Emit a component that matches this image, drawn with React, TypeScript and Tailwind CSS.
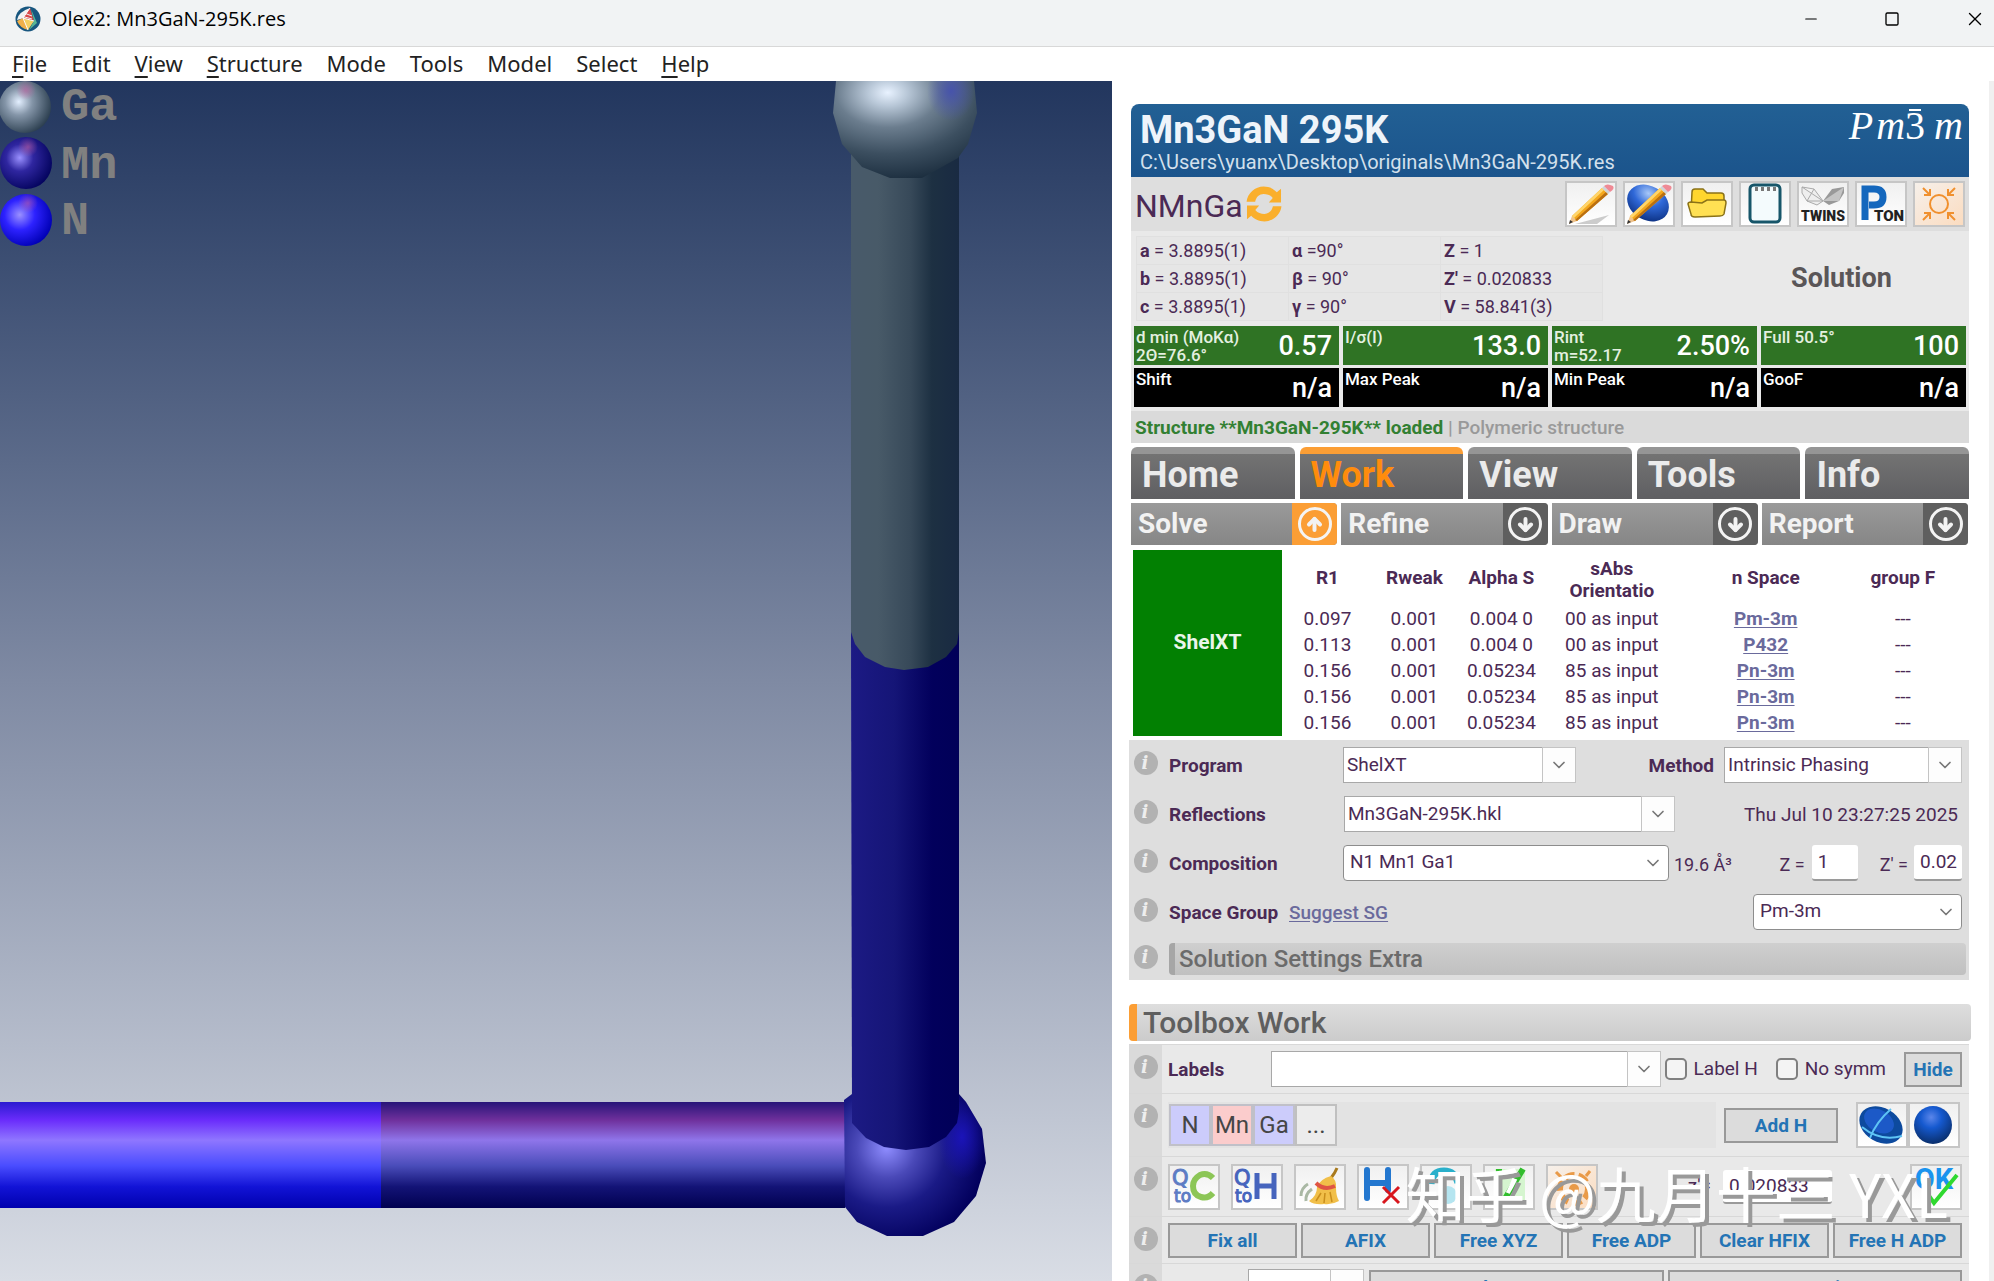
import React from 'react'
import { ArrowDown, ArrowUp, ChevronDown, Minus, Square, X } from 'lucide-react'

const menus = [
  { label: 'File', hot: true },
  { label: 'Edit', hot: false },
  { label: 'View', hot: true },
  { label: 'Structure', hot: true },
  { label: 'Mode', hot: false },
  { label: 'Tools', hot: false },
  { label: 'Model', hot: false },
  { label: 'Select', hot: false },
  { label: 'Help', hot: true },
]

const cell = [
  ['a', '= 3.8895(1)', 'α', '=90°', 'Z', '= 1'],
  ['b', '= 3.8895(1)', 'β', '= 90°', "Z'", '= 0.020833'],
  ['c', '= 3.8895(1)', 'γ', '= 90°', 'V', '= 58.841(3)'],
]

const stats = [
  { label: 'd min (MoKα)', sub: '2Θ=76.6°', value: '0.57' },
  { label: 'I/σ(I)', sub: '', value: '133.0' },
  { label: 'Rint', sub: 'm=52.17', value: '2.50%' },
  { label: 'Full 50.5°', sub: '', value: '100' },
]

const refineStats = ['Shift', 'Max Peak', 'Min Peak', 'GooF']

const tabs = ['Home', 'Work', 'View', 'Tools', 'Info']
const subTabs = ['Solve', 'Refine', 'Draw', 'Report']

const solutions = [
  ['0.097', '0.001', '0.004 0', '00 as input', 'Pm-3m', '---'],
  ['0.113', '0.001', '0.004 0', '00 as input', 'P432', '---'],
  ['0.156', '0.001', '0.05234', '85 as input', 'Pn-3m', '---'],
  ['0.156', '0.001', '0.05234', '85 as input', 'Pn-3m', '---'],
  ['0.156', '0.001', '0.05234', '85 as input', 'Pn-3m', '---'],
]

const fixButtons = ['Fix all', 'AFIX', 'Free XYZ', 'Free ADP', 'Clear HFIX', 'Free H ADP']

function Logo() {
  return (
    <svg viewBox="0 0 26 26" className="h-[26px] w-[26px]">
      <circle cx="13" cy="13" r="12.5" fill="#17567f" />
      <path d="M15 2 Q3 6 2 14 L9 12 Z" fill="#f3f3f3" />
      <path d="M15 2 L19 15 L8 12 Z" fill="#d94b4b" />
      <path d="M9 7 L17 10 M6 10 L17 13" stroke="#f3f3f3" strokeWidth="1" />
      <path d="M8 12 L2 15 Q5 22 13 24 Z" fill="#f0b04a" />
      <path d="M8 12 L19 15 L13 24 Z" fill="#f4cf62" />
      <path d="M16 3 L22 17 L14 24 L19 15 Z" fill="#58b594" />
      <path d="M8 12 L19 15 M15 2 L8 12 L13 24" stroke="#fff" strokeWidth="1" fill="none" />
    </svg>
  )
}

function TitleBar() {
  return (
    <header className="flex h-[46px] shrink-0 items-center bg-[#f1f3f4] pb-[8px] pl-[15px] font-['Open_Sans',sans-serif]">
      <Logo />
      <h1 className="ml-[11px] flex-1 text-[20px] text-black">Olex2: Mn3GaN-295K.res</h1>
      <button aria-label="Minimize" className="px-8"><Minus size={18} strokeWidth={1.5} /></button>
      <button aria-label="Maximize" className="px-8"><Square size={16} strokeWidth={2} /></button>
      <button aria-label="Close" className="pr-2 pl-8"><X size={22} strokeWidth={1.5} /></button>
    </header>
  )
}

function MenuBar() {
  return (
    <nav className="flex h-[35px] shrink-0 items-center gap-6 border-t border-[#d8d8d8] bg-white pb-[2px] pl-3 font-['Noto_Sans',sans-serif] text-[22px] text-[#222]">
      {menus.map((m) => (
        <button key={m.label} className="leading-none">
          {m.hot ? <span className="underline underline-offset-4">{m.label[0]}</span> : m.label[0]}
          {m.label.slice(1)}
        </button>
      ))}
    </nav>
  )
}

function Viewport() {
  return (
    <section className="relative min-w-0 flex-[1112] overflow-hidden bg-linear-to-b from-[#22365e] via-[#7f8aa3] to-[#d9dde5]">
      <svg viewBox="0 0 1112 1200" preserveAspectRatio="xMinYMin slice" className="h-full w-full">
        <defs>
          <linearGradient id="gaRod">
            <stop offset="0" stopColor="#485a6a" />
            <stop offset="0.25" stopColor="#485a68" />
            <stop offset="0.55" stopColor="#374959" />
            <stop offset="0.75" stopColor="#1d3042" />
            <stop offset="1" stopColor="#192a42" />
          </linearGradient>
          <linearGradient id="mnRod">
            <stop offset="0" stopColor="#1c1a84" />
            <stop offset="0.4" stopColor="#151577" />
            <stop offset="0.75" stopColor="#02005c" />
            <stop offset="1" stopColor="#010058" />
          </linearGradient>
          <linearGradient id="nBar" x2="0" y2="1">
            <stop offset="0" stopColor="#2b1ad0" />
            <stop offset="0.17" stopColor="#6a2cfb" />
            <stop offset="0.36" stopColor="#8f76ff" />
            <stop offset="0.6" stopColor="#4a4dff" />
            <stop offset="0.8" stopColor="#1213d6" />
            <stop offset="1" stopColor="#0000ae" />
          </linearGradient>
          <linearGradient id="mnBar" x2="0" y2="1">
            <stop offset="0" stopColor="#271578" />
            <stop offset="0.17" stopColor="#6f309c" />
            <stop offset="0.36" stopColor="#8f75ea" />
            <stop offset="0.6" stopColor="#4a4dba" />
            <stop offset="0.8" stopColor="#131376" />
            <stop offset="1" stopColor="#000050" />
          </linearGradient>
          <radialGradient id="gaBall" cx="0.38" cy="0.12" r="0.9">
            <stop offset="0" stopColor="#e8f2ff" />
            <stop offset="0.15" stopColor="#b9c8d8" />
            <stop offset="0.4" stopColor="#6b7d8e" />
            <stop offset="0.7" stopColor="#3c4f60" />
            <stop offset="1" stopColor="#1d2f40" />
          </radialGradient>
          <radialGradient id="gaGlow">
            <stop offset="0" stopColor="#4450b0" stopOpacity="0.9" />
            <stop offset="1" stopColor="#4450b0" stopOpacity="0" />
          </radialGradient>
          <radialGradient id="mnBall" cx="0.3" cy="0.38" r="0.7">
            <stop offset="0" stopColor="#8f8dff" />
            <stop offset="0.3" stopColor="#4a49b8" />
            <stop offset="0.6" stopColor="#1a1a86" />
            <stop offset="1" stopColor="#02005c" />
          </radialGradient>
          <radialGradient id="blueGlow">
            <stop offset="0" stopColor="#1c14c0" stopOpacity="0.9" />
            <stop offset="1" stopColor="#1c14c0" stopOpacity="0" />
          </radialGradient>
          <radialGradient id="legendGa" cx="0.38" cy="0.4" r="0.65">
            <stop offset="0" stopColor="#e3efff" />
            <stop offset="0.4" stopColor="#8495a8" />
            <stop offset="1" stopColor="#2c3f50" />
          </radialGradient>
          <radialGradient id="legendMn" cx="0.38" cy="0.4" r="0.65">
            <stop offset="0" stopColor="#9a90ff" />
            <stop offset="0.4" stopColor="#2f26a0" />
            <stop offset="1" stopColor="#04045e" />
          </radialGradient>
          <radialGradient id="legendN" cx="0.38" cy="0.4" r="0.65">
            <stop offset="0" stopColor="#9a90ff" />
            <stop offset="0.45" stopColor="#2d22ff" />
            <stop offset="1" stopColor="#0000b4" />
          </radialGradient>
          <radialGradient id="pinkGlow">
            <stop offset="0" stopColor="#c060a0" stopOpacity="0.6" />
            <stop offset="1" stopColor="#c060a0" stopOpacity="0" />
          </radialGradient>
          <clipPath id="mnClip">
            <path d="M844 1019 L852 1013 H959 L966 1021 L982 1048 L986 1082 L976 1115 L954 1141 L923 1155 H887 L857 1141 L845 1126 Z" />
          </clipPath>
        </defs>

        <rect x="0" y="1021" width="382" height="106" fill="url(#nBar)" />
        <rect x="381" y="1021" width="464" height="106" fill="url(#mnBar)" />

        <path d="M844 1019 L852 1013 H959 L966 1021 L982 1048 L986 1082 L976 1115 L954 1141 L923 1155 H887 L857 1141 L845 1126 Z" fill="url(#mnBall)" />
        <ellipse cx="962" cy="1056" rx="24" ry="42" fill="url(#blueGlow)" clipPath="url(#mnClip)" />

        <path d="M851 551 H959 V1030 L957 1042 L946 1056 L929 1066 L906 1069 L884 1066 L866 1057 L852 1042 Z" fill="url(#mnRod)" />
        <path d="M851 60 H959 V551 L957 563 L946 576 L928 586 L904 589 L885 586 L865 576 L855 563 L851 551 Z" fill="url(#gaRod)" />

        <path d="M836 0 L833 32 L842 63 L862 86 L890 97 H922 L958 77 L968 63 L977 32 L974 0 Z" fill="url(#gaBall)" />
        <ellipse cx="951" cy="10" rx="24" ry="30" fill="url(#gaGlow)" />

        <circle cx="25" cy="26" r="26" fill="url(#legendGa)" />
        <circle cx="26" cy="9" r="10" fill="url(#pinkGlow)" />
        <circle cx="26" cy="82" r="26" fill="url(#legendMn)" />
        <circle cx="28" cy="66" r="10" fill="url(#pinkGlow)" />
        <circle cx="26" cy="139" r="26" fill="url(#legendN)" />
        <circle cx="28" cy="122" r="10" fill="url(#pinkGlow)" />
        <g fill="#808080" fontFamily="'Liberation Mono', monospace" fontSize="47" fontWeight="700">
          <text x="61" y="39">Ga</text>
          <text x="61" y="97">Mn</text>
          <text x="61" y="153">N</text>
        </g>
      </svg>
    </section>
  )
}

function Info() {
  return (
    <button aria-label="Info" className="mb-1 flex h-6 w-6 shrink-0 items-center justify-center rounded-full bg-[#b2b2b2] pr-[2px] font-['DejaVu_Serif',serif] text-[18px] leading-none font-bold text-[#eee] italic">
      i
    </button>
  )
}

// combo: separate drop button, as opposed to the rounded plain choice
function Select({ id, label, value, combo, className }: { id: string; label?: string; value: string; combo?: boolean; className: string }) {
  return (
    <div className={`relative h-9 ${className}`}>
      <select
        id={id}
        aria-label={label}
        defaultValue={value}
        className={
          combo
            ? 'h-full w-full appearance-none border border-[#a8a8a8] bg-white px-[3px] pt-[2px] text-[19px] text-[#4b2a55]'
            : 'h-full w-full appearance-none rounded-sm border border-[#8d8d8d] bg-white px-[6px] text-[19px] text-[#4b2a55]'
        }
      >
        <option>{value}</option>
      </select>
      <span
        className={
          combo
            ? 'pointer-events-none absolute inset-y-0 right-0 flex w-[34px] items-center justify-center border border-[#c4c4c4] bg-[#fdfdfd]'
            : 'pointer-events-none absolute inset-y-0 right-0 flex w-8 items-center justify-center'
        }
      >
        <ChevronDown size={20} strokeWidth={2} color="#777" />
      </span>
    </div>
  )
}

function IconButton({ label, tint, children }: { label: string; tint?: boolean; children: React.ReactNode }) {
  return (
    <button
      aria-label={label}
      className={
        tint
          ? 'h-[46px] w-[52px] shrink-0 border-2 border-[#c6c6c6] bg-linear-to-br from-[#f6f0ea] to-[#fbdcc0]'
          : 'h-[46px] w-[52px] shrink-0 border-2 border-[#c6c6c6] bg-linear-to-b from-[#f0f0f0] to-white'
      }
    >
      <svg viewBox="0 0 48 42" className="h-full w-full">{children}</svg>
    </button>
  )
}

function Pencil() {
  return (
    <g>
      <path d="M2 41 L5 33 L10 38 Z" fill="#efc48e" />
      <path d="M2 41 L3 37 L6 39 Z" fill="#333" />
      <path d="M5 33 L35 5 L41 11 L10 38 Z" fill="#f4a71c" />
      <path d="M5 33 L35 5 L37 7 L7 35 Z" fill="#ffd56b" />
      <path d="M8 37 L39 9 L41 11 L10 38 Z" fill="#b96f12" />
      <path d="M35 5 L37 3 L43 9 L41 11 Z" fill="#cfd3d8" />
      <path d="M37 3 Q40 0 46 3 Q48 6 43 9 Z" fill="#ef8a95" />
    </g>
  )
}

function Sun() {
  return (
    <g stroke="#f0902e" strokeWidth="2" fill="none">
      <circle cx="24" cy="21" r="9" />
      <path d="M8 5 L15 12 M15 6 V12 H9 M40 5 L33 12 M33 6 V12 H39 M8 37 L15 30 M15 36 V30 H9 M40 37 L33 30 M33 36 V30 H39" />
    </g>
  )
}

function Header() {
  return (
    <div className="flex h-[73px] justify-between rounded-t-lg bg-linear-to-b from-[#226094] to-[#1b548c] pr-[6px] pl-[9px]">
      <div>
        <h2 className="pt-1 text-[38px] leading-[44px] font-bold text-[#eef4fa]">Mn3GaN 295K</h2>
        <p className="text-[20px] leading-5 text-[#d3e0ec]">C:\Users\yuanx\Desktop\originals\Mn3GaN-295K.res</p>
      </div>
      <div className="flex gap-[3px] font-['Liberation_Serif',serif] text-[40px] leading-[43px] text-white">
        <i>P</i>
        <span>
          <i>m</i>
          <span className="relative">
            3
            <span className="absolute top-[6px] left-[4px] h-[2px] w-3 bg-white" />
          </span>
        </span>
        <i className="pl-[6px]">m</i>
      </div>
    </div>
  )
}

function FormulaRow() {
  return (
    <div className="flex h-[54px] items-center bg-[#dedede] pr-1 pl-1">
      <span className="pt-1 text-[32px] text-[#4b2a55]">NMnGa</span>
      <button aria-label="Refresh" className="ml-[3px]">
        <svg viewBox="0 0 512 512" className="h-[36px] w-[36px]" fill="#faaf2c">
          <path d="M8 225 C20 105 130 8 250 8 C330 8 395 40 438 88 L498 40 V235 H325 L380 170 C345 127 300 115 250 115 C190 115 145 155 130 225 Z" />
          <path d="M504 287 C492 407 382 504 262 504 C182 504 117 472 74 424 L14 472 V277 H187 L132 342 C167 385 212 397 262 397 C322 397 367 357 382 287 Z" />
        </svg>
      </button>
      <div className="ml-auto flex gap-[6px]">
        <IconButton label="Edit">
          <path d="M8 41 L42 32 L30 41 Z" fill="#ccc" />
          <Pencil />
        </IconButton>
        <IconButton label="Edit atoms">
          <defs>
            <radialGradient id="orb" cx="0.4" cy="0.25" r="0.8">
              <stop offset="0" stopColor="#a8c8f8" />
              <stop offset="0.45" stopColor="#2f68d8" />
              <stop offset="1" stopColor="#0b2f80" />
            </radialGradient>
          </defs>
          <ellipse cx="23" cy="20" rx="22" ry="17" transform="rotate(30 23 20)" fill="url(#orb)" />
          <Pencil />
        </IconButton>
        <IconButton label="Open folder">
          <path d="M8 29 L9 9 Q9 6 12 6 L20 6 L24 10 L38 10 Q41 10 41 13 L41 28 Z" fill="#ffd62e" stroke="#8a7218" strokeWidth="1.5" />
          <path d="M5 21 Q5 19 8 19 L19 20 L24 17 L41 17 Q43 17 43 20 L41 31 Q40 33 37 33 L12 34 Q8 34 8 31 Z" fill="#ffe053" stroke="#8a7218" strokeWidth="1.5" />
        </IconButton>
        <IconButton label="Notes">
          <rect x="9" y="2" width="30" height="37" rx="4" fill="#f4fbfd" stroke="#17566a" strokeWidth="3" />
          <path d="M14 6 H35" stroke="#777" strokeWidth="4" strokeDasharray="3 3" />
        </IconButton>
        <IconButton label="Twins">
          <path d="M3 4 L15 6 L24 18 L18 22 L8 18 L3 10 Z M3 4 L24 18 L8 18 L15 6" fill="#eee" stroke="#aaa" />
          <path d="M45 4 L33 6 L24 18 L30 22 L40 18 L45 10 Z" fill="#999" />
          <path d="M45 4 L24 18 L40 18 Z" fill="#c4c4c4" />
          <text x="24" y="38" textAnchor="middle" fontFamily="Roboto, sans-serif" fontSize="14" fontWeight="900" fill="#222">TWINS</text>
        </IconButton>
        <IconButton label="Platon">
          <path d="M8 37 V6 H17 Q26 6 26 14 Q26 22 17 22 H12" stroke="#1467bd" strokeWidth="7" fill="none" />
          <text x="17" y="38" fontFamily="Roboto, sans-serif" fontSize="15" fontWeight="900" fill="#222">TON</text>
        </IconButton>
        <IconButton label="Centre" tint><Sun /></IconButton>
      </div>
    </div>
  )
}

function CellTable() {
  return (
    <div className="flex bg-[#e9e9e9] pt-[5px] pb-[5px] pl-[5px]">
      <table className="w-[467px] table-fixed border border-[#dedede] bg-[#e6e6e6] text-[18px] text-[#4b2a55]">
        <colgroup>
          <col className="w-[152px]" />
          <col className="w-[152px]" />
          <col />
        </colgroup>
        <tbody>
          {cell.map((row) => (
            <tr key={row[0]} className="h-7">
              {[0, 2, 4].map((i) => (
                <td key={i} className="border border-[#e0e0e0] px-[3px] leading-6">
                  <b>{row[i]}</b> {row[i + 1]}
                </td>
              ))}
            </tr>
          ))}
        </tbody>
      </table>
      <div className="flex flex-1 items-center justify-center pl-[111px] text-[27px] font-bold text-[#5a5658]">Solution</div>
    </div>
  )
}

function Stats() {
  return (
    <div className="grid grid-cols-4 gap-x-1 gap-y-[3px] bg-[#e9e9e9] px-[3px] pb-1 text-white">
      {stats.map((s) => (
        <div key={s.label} className="flex h-[39px] justify-between bg-[#2f7324] pr-[7px] pl-[2px]">
          <div className="pt-[2px] text-[17px] leading-[18px] font-medium text-[#e4f0e0]">
            <div>{s.label}</div>
            <div>{s.sub}</div>
          </div>
          <div className="text-[27px] leading-[41px] font-medium">{s.value}</div>
        </div>
      ))}
      {refineStats.map((label) => (
        <div key={label} className="flex h-[39px] justify-between bg-black pr-[7px] pl-[2px]">
          <div className="pt-[2px] text-[17px] leading-[18px] font-medium">{label}</div>
          <div className="text-[27px] leading-[41px] font-medium">n/a</div>
        </div>
      ))}
    </div>
  )
}

function Tabs() {
  return (
    <>
      <nav className="mx-[2px] mt-1 grid grid-cols-5 gap-x-[5px]">
        {tabs.map((t) => (
          <button
            key={t}
            className={
              t === 'Work'
                ? 'h-[52px] rounded-t-md border-t-[7px] border-[#fb9e35] bg-linear-to-b from-[#737373] to-[#5f5f62] pb-1 pl-[11px] text-left text-[36px] leading-[40px] font-bold text-[#ff8c0d]'
                : 'h-[52px] rounded-t-md border-t-[7px] border-[#959595] bg-linear-to-b from-[#737373] to-[#5f5f62] pb-1 pl-[11px] text-left text-[36px] leading-[40px] font-bold text-[#ebebeb]'
            }
          >
            {t}
          </button>
        ))}
      </nav>
      <nav className="mr-[3px] ml-[2px] mt-1 grid grid-cols-4 gap-x-1">
        {subTabs.map((t) => (
          <button key={t} className="flex h-[42px] items-center justify-between overflow-hidden rounded-r-sm bg-linear-to-b from-[#9a9a9a] to-[#868686] pl-[7px] text-[28px] leading-none font-bold text-[#f2f2f2]">
            {t}
            <span className={t === 'Solve' ? 'flex h-full w-[45px] items-center justify-center bg-[#fb9e35]' : 'flex h-full w-[45px] items-center justify-center bg-[#5f5f5f]'}>
              <span className="flex h-[34px] w-[34px] items-center justify-center rounded-full border-[3px] border-[#f4f4f4]">
                {t === 'Solve' ? <ArrowUp size={19} strokeWidth={5} /> : <ArrowDown size={19} strokeWidth={5} />}
              </span>
            </span>
          </button>
        ))}
      </nav>
    </>
  )
}

function Results() {
  return (
    <div className="mx-1 mt-[5px] mb-1 flex text-[19px] text-[#4b2a55]">
      <button className="w-[149px] shrink-0 bg-[#028002] text-[21px] font-bold text-[#eaf5ea]">ShelXT</button>
      <div className="flex-1 pr-[14px] pl-[2px]">
        <table className="w-full table-fixed text-center leading-[22px]">
          <colgroup>
            <col className="w-[13%]" />
            <col className="w-[13%]" />
            <col className="w-[13%]" />
            <col className="w-[20%]" />
            <col className="w-[26%]" />
            <col className="w-[15%]" />
          </colgroup>
          <thead>
            <tr className="h-[56px] align-middle font-bold">
              <th>R1</th>
              <th>Rweak</th>
              <th>Alpha S</th>
              <th className="pt-1">sAbs<br />Orientatio</th>
              <th>n Space</th>
              <th>group F</th>
            </tr>
          </thead>
          <tbody>
            {solutions.map((row, i) => (
              <tr key={i} className="h-[26px]">
                {row.map((v, j) => (
                  <td key={j}>{j === 4 ? <a href="#" className="font-bold text-[#6a6a9c] underline underline-offset-2">{v}</a> : v}</td>
                ))}
              </tr>
            ))}
          </tbody>
        </table>
      </div>
    </div>
  )
}

function SolveForm() {
  return (
    <div className="mr-[2px] bg-[#dedede] pr-[7px] pl-[5px] text-[19px] text-[#4b2a55]">
      <div className="flex h-[49px] items-center">
        <Info />
        <label htmlFor="program" className="ml-[11px] w-[174px] pt-[3px] font-bold">Program</label>
        <Select id="program" value="ShelXT" combo className="w-[233px]" />
        <label htmlFor="method" className="mr-[10px] ml-auto pt-[3px] font-bold">Method</label>
        <Select id="method" value="Intrinsic Phasing" combo className="w-[238px]" />
      </div>
      <div className="flex h-[49px] items-center">
        <Info />
        <label htmlFor="reflections" className="ml-[11px] w-[175px] pt-[3px] font-bold">Reflections</label>
        <Select id="reflections" value="Mn3GaN-295K.hkl" combo className="w-[331px]" />
        <span className="mr-1 ml-auto pt-[3px]">Thu Jul 10 23:27:25 2025</span>
      </div>
      <div className="flex h-[49px] items-center">
        <Info />
        <label htmlFor="composition" className="ml-[11px] w-[174px] pt-[3px] font-bold">Composition</label>
        <Select id="composition" value="N1 Mn1 Ga1" className="w-[326px]" />
        <span className="ml-[5px] pt-[3px] text-[18px]">19.6 Å³</span>
        <label htmlFor="z" className="mr-[7px] ml-auto pt-[3px] text-[18px]">Z =</label>
        <input id="z" defaultValue="1" className="h-9 w-[46px] rounded-[3px] border-b-2 border-[#9a9a9a] bg-white px-[6px]" />
        <label htmlFor="zprime" className="mr-[6px] ml-[22px] pt-[3px] text-[18px]">Z' =</label>
        <input id="zprime" defaultValue="0.02" className="h-9 w-[48px] rounded-[3px] border-b-2 border-[#9a9a9a] bg-white pl-[6px]" />
      </div>
      <div className="flex h-[49px] items-center">
        <Info />
        <label htmlFor="spacegroup" className="ml-[11px] w-[120px] pt-[3px] font-bold">Space Group</label>
        <a href="#" className="pt-[3px] font-medium text-[#6a6a9c] underline underline-offset-2">Suggest SG</a>
        <Select id="spacegroup" value="Pm-3m" className="ml-auto w-[209px]" />
      </div>
      <div className="-mr-1 flex h-[44px] items-center pt-[2px]">
        <Info />
        <button className="ml-[11px] h-8 flex-1 rounded-[4px] border-l-[6px] border-[#a6a6a6] bg-linear-to-b from-[#cfcfcf] to-[#c0c0c0] pl-1 text-left text-[24px] leading-none font-medium text-[#6b6b6b]">
          Solution Settings Extra
        </button>
      </div>
    </div>
  )
}

function ToolRow({ className, children }: { className: string; children: React.ReactNode }) {
  return (
    <div className={`flex border-t border-[#d8d8d8] ${className}`}>
      <div className="flex w-[33px] shrink-0 items-start justify-center bg-[#dadada] pt-[10px]"><Info /></div>
      <div className="flex min-w-0 flex-1 items-center bg-[#e9e9e9] pr-[7px] pl-[6px]">{children}</div>
    </div>
  )
}

function Toolbox() {
  const plain = 'h-[35px] border-2 border-[#999] bg-[#dcdcdc] text-[19px] leading-none font-bold text-[#2474b5]'
  return (
    <div className="mt-6 text-[19px] text-[#4b2a55]">
      <h3 className="h-[37px] rounded-[4px] border-l-8 border-[#fb9e35] bg-linear-to-b from-[#dedede] to-[#cbcbcb] pl-[6px] text-[30px] leading-[38px] font-medium text-[#5f5f5f]">
        Toolbox Work
      </h3>
      <div className="mt-[3px] mr-[2px]">
        <ToolRow className="h-[49px]">
          <label htmlFor="labels" className="w-[103px] pt-[3px] font-bold">Labels</label>
          <Select id="labels" value="" combo className="min-w-0 flex-1" />
          <label className="ml-1 flex items-center gap-[7px]">
            <input type="checkbox" className="h-[22px] w-[22px] appearance-none rounded-[5px] border-2 border-[#808080] bg-[#f4f4f4]" />
            Label H
          </label>
          <label className="ml-[18px] flex items-center gap-[7px]">
            <input type="checkbox" className="h-[22px] w-[22px] appearance-none rounded-[5px] border-2 border-[#808080] bg-[#f4f4f4]" />
            No symm
          </label>
          <button className={`ml-[18px] w-[58px] ${plain}`}>Hide</button>
        </ToolRow>
        <ToolRow className="h-[63px]">
          <div className="flex h-[46px] flex-1 items-center bg-[#e3e3e3] pl-[1px] text-[24px] text-[#454545]">
            <button className="h-[42px] w-[42px] border-2 border-[#c0c0c8] bg-[#ccccfb]">N</button>
            <button className="h-[42px] w-[42px] border-2 border-[#c0c0c8] bg-[#fbcccc]">Mn</button>
            <button className="h-[42px] w-[42px] border-2 border-[#c0c0c8] bg-[#ccccfb]">Ga</button>
            <button className="h-[42px] w-[42px] border-2 border-[#c0c0c0] bg-[#ececec]">...</button>
          </div>
          <button className={`mr-[18px] ml-2 w-[114px] ${plain}`}>Add H</button>
          <div className="mr-[2px] flex">
            <IconButton label="Ellipsoids">
              <ellipse cx="23" cy="21" rx="23" ry="17" transform="rotate(30 23 21)" fill="#0d4a9e" />
              <ellipse cx="21" cy="17" rx="16" ry="11" transform="rotate(30 21 17)" fill="#2360d8" opacity="0.7" />
              <path d="M33 5 Q18 18 12 34 M4 23 Q22 38 44 32" stroke="#5ec4f5" strokeWidth="2" fill="none" />
            </IconButton>
            <IconButton label="Spheres">
              <defs>
                <radialGradient id="ball" cx="0.45" cy="0.3" r="0.7">
                  <stop offset="0" stopColor="#5b86ea" />
                  <stop offset="0.4" stopColor="#1559cf" />
                  <stop offset="1" stopColor="#0a2f6c" />
                </radialGradient>
              </defs>
              <circle cx="23" cy="21" r="19" fill="url(#ball)" />
            </IconButton>
          </div>
        </ToolRow>
        <ToolRow className="h-[60px]">
          <div className="flex flex-1 gap-[11px]">
            <IconButton label="Q to C">
              <g fontFamily="'DejaVu Sans', sans-serif" fill="#5d7cc4" stroke="#5d7cc4">
                <text x="2" y="19" fontSize="21">Q</text>
                <text x="4" y="36" fontSize="17">to</text>
              </g>
              <path d="M43 12 Q37 6 30 9 Q23 13 23 20 Q23 29 31 31 Q38 33 43 27" stroke="#8cc657" strokeWidth="6" fill="none" />
            </IconButton>
            <IconButton label="Q to H">
              <g fontFamily="'DejaVu Sans', sans-serif" fill="#4664bd" stroke="#4664bd">
                <text x="1" y="19" fontSize="21">Q</text>
                <text x="2" y="36" fontSize="17">to</text>
              </g>
              <path d="M24 7 V33 M41 7 V33 M24 20 H41" stroke="#4664bd" strokeWidth="5" fill="none" />
            </IconButton>
            <IconButton label="Tidy">
              <path d="M41 2 Q39 7 35 12" stroke="#a87a1e" strokeWidth="3" fill="none" />
              <path d="M35 10 Q41 14 40 22 Q40 30 43 35 Q36 39 28 38 Q18 39 13 35 Q21 30 21 21 Q24 13 35 10 Z" fill="#f1bf49" />
              <path d="M20 17 Q28 25 39 20" stroke="#df5444" strokeWidth="4" fill="none" />
              <path d="M20 35 L25 27 M28 37 L29 27 M36 36 L34 26" stroke="#c98e1c" strokeWidth="1.5" />
              <path d="M5 30 Q5 22 12 18 M10 35 Q9 28 16 23" stroke="#a9b8a4" strokeWidth="3" fill="none" />
            </IconButton>
            <IconButton label="Remove H">
              <path d="M8 4 V32 M29 4 V24 M8 17 H29" stroke="#2377cf" strokeWidth="6" strokeLinecap="round" fill="none" />
              <path d="M24 21 L40 37 M40 21 L24 37" stroke="#d8161d" strokeWidth="3" />
            </IconButton>
            <IconButton label="Assign">
              <path d="M9 18 Q10 5 22 5 Q33 5 36 17" stroke="#2ab0cb" strokeWidth="7" fill="none" />
              <circle cx="26" cy="29" r="9" fill="#b5e5f0" />
            </IconButton>
            <IconButton label="Sort">
              <rect x="10" y="3" width="30" height="34" fill="#d5f5cf" />
              <path d="M14 3 V36 M38 3 L18 36" stroke="#31bd2c" strokeWidth="6" fill="none" />
            </IconButton>
            <IconButton label="Move near" tint>
              <circle cx="26" cy="23" r="14" stroke="#e99a48" strokeWidth="6" strokeDasharray="10 4" fill="none" />
              <circle cx="26" cy="23" r="5" fill="#e99a48" />
              <path d="M8 6 L14 12 M42 5 L38 10" stroke="#e99a48" strokeWidth="3" />
            </IconButton>
          </div>
          <label htmlFor="zval" className="mr-3">z'=</label>
          <input id="zval" defaultValue="0.020833" className="h-[34px] w-[109px] rounded-[3px] border-b-2 border-[#9a9a9a] bg-white px-[6px]" />
          <div className="ml-[78px] flex">
            <IconButton label="OK">
              <text x="22" y="23" textAnchor="middle" fontFamily="Roboto, sans-serif" fontSize="29" fontWeight="700" fill="#1a93ee">OK</text>
              <path d="M15 27 L22 37 L45 9" stroke="#2fd92f" strokeWidth="4" fill="none" />
            </IconButton>
          </div>
        </ToolRow>
        <ToolRow className="h-[47px]">
          <div className="grid flex-1 grid-cols-6 gap-1">
            {fixButtons.map((b) => (
              <button key={b} className={plain}>{b}</button>
            ))}
          </div>
        </ToolRow>
        <ToolRow className="h-[47px]">
          <Select id="map" label="Map" value="" combo className="ml-20 w-[116px]" />
          <button className={`ml-[5px] flex-1 ${plain}`}>Show Map</button>
          <button className={`ml-1 flex-1 ${plain}`}>Map Settings</button>
        </ToolRow>
      </div>
    </div>
  )
}

export default function App() {
  return (
    <div className="relative flex h-screen flex-col overflow-hidden bg-white">
      <TitleBar />
      <MenuBar />
      <main className="flex min-h-0 flex-1">
        <Viewport />
        <aside className="min-w-0 flex-[882] overflow-hidden bg-white font-['Roboto',sans-serif]">
          <div className="border-r-[5px] border-[#f0f0f0] pt-[23px] pr-[18px] pl-[17px]">
            <div className="mx-[2px]">
              <Header />
              <FormulaRow />
              <CellTable />
              <Stats />
              <p className="h-8 bg-[#dadada] pl-1 text-[19px] leading-[34px] font-medium text-[#999]">
                <b className="text-[#328032]">Structure **Mn3GaN-295K** loaded</b> | Polymeric structure
              </p>
            </div>
            <Tabs />
            <Results />
            <SolveForm />
            <Toolbox />
          </div>
        </aside>
      </main>
      <div className="pointer-events-none absolute right-[46px] bottom-[45px] font-['Noto_Sans_CJK_SC',sans-serif] text-[60px] leading-[88px] text-white [text-shadow:4px_4px_0_#999]">
        知乎 @九月十三 YXL
      </div>
    </div>
  )
}
